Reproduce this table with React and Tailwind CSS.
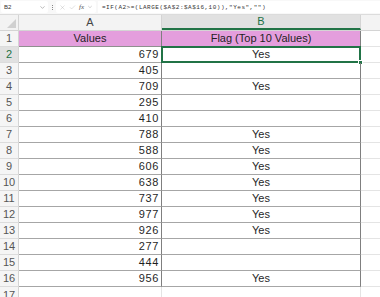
import { X, Check, ChevronDown } from "lucide-react";

const rows = [
  [679, "Yes"],
  [405, ""],
  [709, "Yes"],
  [295, ""],
  [410, ""],
  [788, "Yes"],
  [588, "Yes"],
  [606, "Yes"],
  [638, "Yes"],
  [737, "Yes"],
  [977, "Yes"],
  [926, "Yes"],
  [277, ""],
  [444, ""],
  [956, "Yes"],
];

const FormulaBar = () => (
  <div className="flex items-center h-[15px] bg-[#f8f8f8] border-b border-[#dcdcdc] text-[#444]">
    <div className="flex items-center justify-between w-[47px] h-[12px] ml-[1px] pl-[3px] pr-[2px] bg-white rounded-[2px]">
      <span className="text-[6px] text-[#333]">B2</span>
      <ChevronDown size={7} strokeWidth={1.5} className="text-[#666]" />
    </div>
    <div className="w-[8px] flex flex-col items-center gap-[1px]">
      <span className="w-[1px] h-[1px] bg-[#888]" />
      <span className="w-[1px] h-[1px] bg-[#888]" />
      <span className="w-[1px] h-[1px] bg-[#888]" />
    </div>
    <div className="flex items-center h-[12px] w-[40px] bg-white rounded-[2px] px-[3px] gap-[3px] text-[#aaa]">
      <X size={7} strokeWidth={1.2} />
      <Check size={7} strokeWidth={1.2} />
      <span className="italic text-[7px] text-[#555] font-['Liberation_Serif',serif]">fx</span>
      <ChevronDown size={6} strokeWidth={1.5} className="text-[#888]" />
    </div>
    <div className="flex-1 flex items-center h-[12px] ml-[2px] bg-white pl-[4px]">
      <span className="text-[6px] tracking-[0.5px] text-[#333] font-['Liberation_Mono',monospace] whitespace-nowrap">
        {'=IF(A2>=(LARGE($A$2:$A$16,10)),"Yes","")'}
      </span>
    </div>
  </div>
);

const HeaderRow = () => (
  <div className="flex h-[16px] bg-[#f3f3f3] text-[11px] text-[#444] border-b border-[#d4d4d4]">
    <div className="relative w-[19px] border-r border-[#d4d4d4]">
      <div className="absolute right-[2px] bottom-[2px] w-0 h-0 border-l-[9px] border-l-transparent border-b-[9px] border-b-[#d0d0d0]" />
    </div>
    <div className="w-[143px] flex items-center justify-center border-r border-[#d4d4d4]">A</div>
    <div className="w-[199px] flex items-center justify-center bg-[#e1e1e1] text-[#1e7145] border-b-2 border-[#217346] border-r border-r-[#d4d4d4]">
      B
    </div>
    <div className="flex-1" />
  </div>
);

const DataRow = ({ n, a, b, head, selected }) => (
  <div className="flex h-[16px] text-[11px] text-[#1f1f1f]">
    <div
      className={
        selected
          ? "w-[19px] flex items-center justify-center bg-[#e1e1e1] text-[#1e7145] border-r border-[#d4d4d4] border-b border-b-[#dcdcdc]"
          : "w-[19px] flex items-center justify-center bg-[#f5f5f5] text-[#555] border-r border-[#d4d4d4] border-b border-b-[#dcdcdc]"
      }
    >
      {n}
    </div>
    <div
      className={
        head
          ? "w-[143px] flex items-center justify-center bg-[#e49edd] border-r border-[#7f7f7f] border-b border-b-[#8f8f8f]"
          : "w-[143px] flex items-center justify-end pr-[2px] tracking-[0.6px] border-r border-[#7f7f7f] border-b border-b-[#a6a6a6]"
      }
    >
      {a}
    </div>
    <div
      className={
        head
          ? "w-[199px] flex items-center justify-center bg-[#e49edd] border-r border-[#7f7f7f] border-b border-b-[#8f8f8f]"
          : "relative w-[199px] flex items-center justify-center border-r border-[#7f7f7f] border-b border-b-[#a6a6a6]"
      }
    >
      {b}
      {selected && (
        <div className="absolute inset-[-1px] top-[-1px] border-2 border-[#217346]">
          <div className="absolute right-[-4px] bottom-[-4px] w-[5px] h-[5px] bg-[#217346] border border-white" />
        </div>
      )}
    </div>
    <div className="flex-1 border-b border-[#e4e4e4]" />
  </div>
);

export default function App() {
  return (
    <div className="w-[380px] h-[297px] overflow-hidden bg-white font-['Liberation_Sans',Arial,sans-serif]">
      <FormulaBar />
      <HeaderRow />
      <DataRow n={1} a="Values" b="Flag (Top 10 Values)" head />
      {rows.map((r, i) => (
        <DataRow key={"row" + i} n={i + 2} a={r[0]} b={r[1]} selected={i === 0} />
      ))}
      <div className="flex h-[16px] text-[11px]">
        <div className="w-[19px] flex items-center justify-center bg-[#f5f5f5] text-[#555] border-r border-[#d4d4d4]">17</div>
        <div className="w-[143px] border-r border-[#e4e4e4]" />
        <div className="w-[199px] border-r border-[#e4e4e4]" />
        <div className="flex-1" />
      </div>
    </div>
  );
}
